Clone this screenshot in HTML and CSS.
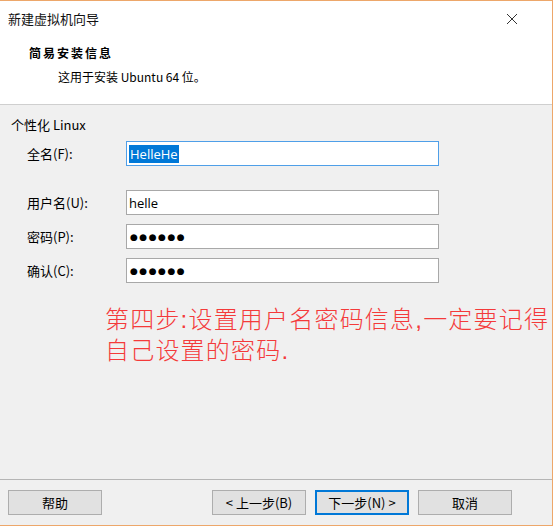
FILE: index.html
```html
<!DOCTYPE html>
<html lang="zh-CN">
<head>
<meta charset="utf-8">
<title>新建虚拟机向导</title>
<link rel="stylesheet" href="styles.css">
</head>
<body>
<div class="window">
  <div class="titlebar">
    <span class="title">新建虚拟机向导</span>
    <svg class="close" width="12" height="12" viewBox="0 0 12 12"><path d="M1 1 L11 11 M11 1 L1 11" stroke="#333" stroke-width="1" fill="none"/></svg>
  </div>
  <div class="header">
    <div class="heading">简易安装信息</div>
    <div class="subtitle">这用于安装 Ubuntu 64 位。</div>
  </div>
  <div class="body">
    <div class="group">个性化 Linux</div>
    <div class="row">
      <span class="label">全名(F):</span>
      <div class="field focused"><span class="sel">HelleHe</span></div>
    </div>
    <div class="row row-gap">
      <span class="label">用户名(U):</span>
      <div class="field">helle</div>
    </div>
    <div class="row">
      <span class="label">密码(P):</span>
      <div class="field dots">●●●●●●</div>
    </div>
    <div class="row">
      <span class="label">确认(C):</span>
      <div class="field dots">●●●●●●</div>
    </div>
    <div class="note">第四步:设置用户名密码信息,一定要记得<br>自己设置的密码.</div>
  </div>
  <div class="footer">
    <button class="btn">帮助</button>
    <div class="spacer"></div>
    <button class="btn">&lt; 上一步(B)</button>
    <button class="btn default">下一步(N) &gt;</button>
    <button class="btn">取消</button>
  </div>
</div>
</body>
</html>
```
FILE: styles.css
```css
* { box-sizing: border-box; }
html, body { margin: 0; padding: 0; background: #ffffff; }
body { font-family: "Noto Sans CJK SC", "Noto Sans", sans-serif; font-size: 13px; color: #000; }
.window {
  width: 553px;
  height: 526px;
  border-top: 1px solid #eda76a;
  border-right: 1px solid #eda76a;
  border-bottom: 1px solid #eda76a;
  display: flex;
  flex-direction: column;
  background: #f0f0f0;
  overflow: hidden;
}
.titlebar {
  height: 36px;
  background: #fff;
  display: flex;
  align-items: center;
  padding-left: 8px;
  padding-right: 34px;
  justify-content: space-between;
}
.title { font-size: 13px; line-height: 16px; color: #111; }
.close { display: block; }
.header {
  height: 68px;
  background: #fff;
  border-bottom: 1px solid #cfcfcf;
  padding-top: 8px;
  padding-left: 29px;
}
.heading { font-weight: 700; font-size: 12px; line-height: 16px; letter-spacing: 2px; }
.subtitle { margin-top: 8px; padding-left: 29px; font-size: 12px; line-height: 16px; }
.body { flex: 1; padding-top: 12px; }
.group { padding-left: 11px; line-height: 16px; }
.row { display: flex; align-items: center; margin-top: 9px; padding-left: 27px; }
.row:nth-child(2) { margin-top: 8px; }
.row-gap { margin-top: 24px !important; }
.label { width: 99px; line-height: 16px; }
.field {
  width: 313px;
  height: 25px;
  background: #fff;
  border: 1px solid #a8a8a8;
  display: flex;
  align-items: center;
  padding-left: 2px;
  font-family: "Open Sans", "Noto Sans", sans-serif;
  font-size: 13px;
}
.field.focused { border-color: #4f9fe8; }
.sel { background: #0078d7; color: #fff; line-height: 18px; padding: 0 1px; }
.dots { font-family: "DejaVu Sans", sans-serif; font-size: 9px; letter-spacing: 1.5px; padding-left: 3px; }
.note {
  margin-top: 21px;
  padding-left: 105px;
  color: #f43a3a;
  font-family: "Liberation Sans", "Noto Sans CJK SC", sans-serif;
  font-weight: 300;
  font-size: 24px;
  line-height: 31px;
  letter-spacing: 1.2px;
  white-space: nowrap;
}
.footer {
  height: 46px;
  border-top: 1px solid #b5b5b5;
  display: flex;
  align-items: flex-start;
  padding: 10px 40px 0 8px;
  gap: 9px;
}
.spacer { flex: 1; }
.btn {
  width: 94px;
  height: 25px;
  background: #e1e1e1;
  border: 1px solid #adadad;
  font-family: "Noto Sans CJK SC", sans-serif;
  font-size: 13px;
  color: #000;
  padding: 0;
  line-height: 16px;
}
.btn.default { border: 2px solid #0078d7; }
```
